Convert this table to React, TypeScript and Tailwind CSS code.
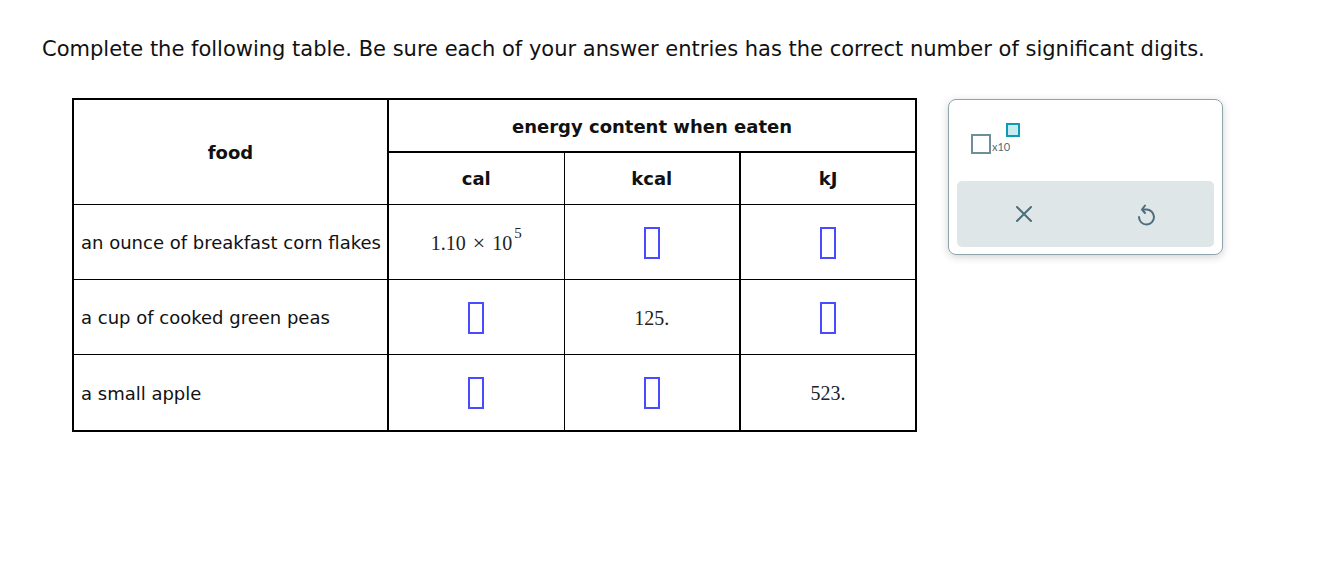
import React from 'react';

const AnswerBox = () => (
  <span className="inline-block w-[16px] h-[32px] border-2 border-[#4a4aff] align-middle" />
);

const Serif = ({ children }: { children: React.ReactNode }) => (
  <span className="font-['Liberation_Serif',serif] text-[20px] text-[#222]">{children}</span>
);

const rows = [
  { food: 'an ounce of breakfast corn flakes', cal: 'sci', kcal: null, kj: null },
  { food: 'a cup of cooked green peas', cal: null, kcal: '125.', kj: null },
  { food: 'a small apple', cal: null, kcal: null, kj: '523.' },
];

const Cell = ({ value }: { value: string | null }) => {
  if (value === null) return <AnswerBox />;
  if (value === 'sci') {
    return (
      <Serif>
        1.10<span className="mx-[7px] text-[22px]">×</span>10
        <sup className="relative -top-[12px] text-[15px] ml-[2px]">5</sup>
      </Serif>
    );
  }
  return <Serif>{value}</Serif>;
};

export default function App() {
  return (
    <div className="min-h-[579px] bg-white font-['DejaVu_Sans',sans-serif] text-[#111]">
      <p className="pl-[42px] pt-[36px] text-[21px] leading-[26px] whitespace-nowrap">
        Complete the following table. Be sure each of your answer entries has the correct number of significant digits.
      </p>

      <div className="flex items-start mt-[36px] pl-[72px]">
        <table className="border-collapse border-2 border-black w-[845px] text-[18px] table-fixed">
          <tbody>
            <tr className="h-[53px]">
              <th rowSpan={2} className="w-[315px] border-r-2 border-b border-black font-bold text-[18px] pt-[1px]">
                food
              </th>
              <th colSpan={3} className="border-b-2 border-black font-bold text-[18px] pt-[2px]">
                energy content when eaten
              </th>
            </tr>
            <tr className="h-[52px]">
              <th className="w-[175px] border-r border-b border-black font-bold text-[18px]">cal</th>
              <th className="w-[175px] border-r-2 border-b border-black font-bold text-[18px]">kcal</th>
              <th className="border-b border-black font-bold text-[18px]">kJ</th>
            </tr>
            {rows.map((r, i) => (
              <tr key={i} className={i === 2 ? 'h-[77px]' : 'h-[75px]'}>
                <td className="border-r-2 border-b border-black pl-[7px] pr-[2px] pt-[2px] whitespace-nowrap text-[18px]">
                  {r.food}
                </td>
                <td className="border-r border-b border-black text-center pt-[2px]">
                  <Cell value={r.cal} />
                </td>
                <td className="border-r-2 border-b border-black text-center pt-[2px]">
                  <Cell value={r.kcal} />
                </td>
                <td className="border-b border-black text-center pt-[2px]">
                  <Cell value={r.kj} />
                </td>
              </tr>
            ))}
          </tbody>
        </table>

        <div className="ml-[31px] mt-[1px] w-[275px] h-[156px] rounded-[8px] border border-[#8fa3aa] shadow-[0_2px_8px_rgba(0,0,0,0.18)] px-[8px] pt-[23px]">
          <div className="flex items-end h-[31px] pl-[14px]">
            <span className="w-[20px] h-[20px] border-2 border-[#6e8e98] bg-white" />
            <span className="text-[11px] leading-[12px] text-[#4d6e7a] font-['Lato',sans-serif] ml-[1px] mb-[1px]">x10</span>
            <span className="self-start -ml-[4px] w-[14px] h-[14px] border-2 border-[#0f9ab4] bg-[#c7ebf3]" />
          </div>
          <div className="mt-[27px] h-[66px] rounded-[5px] bg-[#dfe6e8] flex items-center justify-around px-[6px]">
            <svg width="20" height="20" viewBox="0 0 20 20">
              <path d="M3 3 L17 17 M17 3 L3 17" stroke="#4a6e7c" strokeWidth="2" strokeLinecap="round" />
            </svg>
            <svg width="22" height="24" viewBox="0 0 22 24">
              <path
                d="M4 15 A7.5 7.5 0 1 0 11 7.5 L8 7.5"
                fill="none"
                stroke="#4a6e7c"
                strokeWidth="2"
                strokeLinecap="round"
              />
              <path d="M10 3.5 L7 7.5 L10 11" fill="none" stroke="#4a6e7c" strokeWidth="2" strokeLinecap="round" strokeLinejoin="round" />
            </svg>
          </div>
        </div>
      </div>
    </div>
  );
}
